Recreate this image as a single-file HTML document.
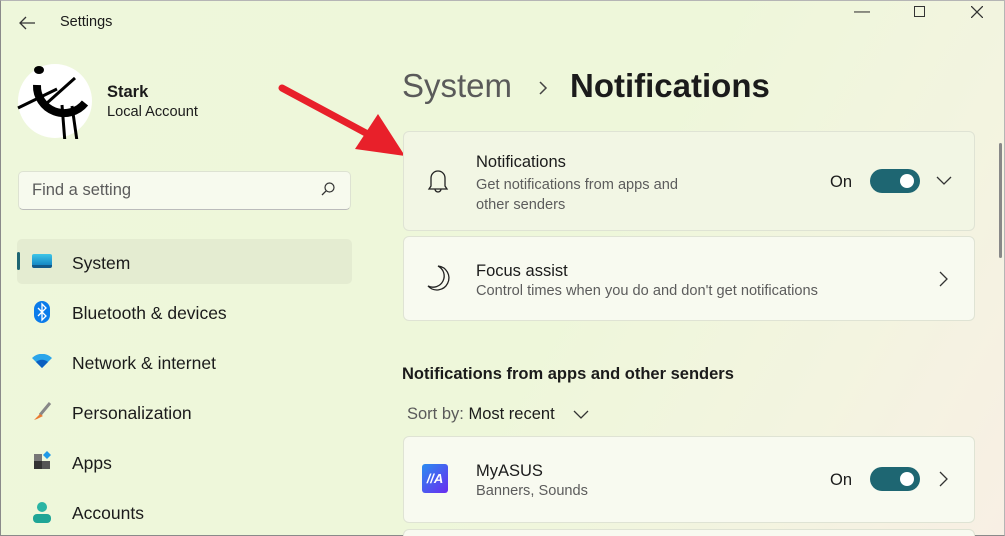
<!DOCTYPE html>
<html style="overflow:hidden;width:1005px;height:536px"><head><style>
*{margin:0;padding:0;box-sizing:border-box}
body{width:1005px;height:536px;overflow:hidden;font-family:"Liberation Sans",sans-serif;color:#1b1b1b;position:relative;
background:linear-gradient(120deg,#eef7db 0%,#eef7da 55%,#f3f4e0 80%,#f8efe4 100%);border-left:1px solid #8a8a8a;border-bottom:1px solid #8a8a8a;border-top:1px solid #b5b5b5;border-right:1px solid #b5b5b5}
.a{position:absolute}
.card{position:absolute;left:402px;width:572px;border:1px solid #dfe3d4;border-radius:6px;background:#f8faf0}
.t{font-size:16.5px;color:#1b1b1b}
.s{font-size:14.6px;color:#5c5c5c}
.tog{position:absolute;width:50px;height:24px;border-radius:12px;background:#1e6672}
.tog:after{content:"";position:absolute;right:6px;top:5px;width:14px;height:14px;border-radius:50%;background:#fff}
.nav{position:absolute;left:71px;font-size:17.5px;color:#1b1b1b}
</style></head><body>
<svg class="a" style="left:17px;top:14px" width="18" height="16"><path d="M17 8H2M8 2L2 8l6 6" fill="none" stroke="#333" stroke-width="1.3"/></svg>
<div class="a" style="left:59px;top:13px;font-size:14.5px">Settings</div>
<div class="a" style="left:853px;top:2px;font-size:16px;color:#333">&#8212;</div>
<div class="a" style="left:913px;top:5px;width:11px;height:11px;border:1.3px solid #333"></div>
<svg class="a" style="left:970px;top:5px" width="12" height="12"><path d="M0 0L12 12M12 0L0 12" stroke="#333" stroke-width="1.3"/></svg>
<svg class="a" style="left:16px;top:62px" width="76" height="76" viewBox="0 0 76 76"><circle cx="38" cy="38" r="37" fill="#fff"/><path d="M20 22a27 27 0 0 0 48 18" fill="none" stroke="#000" stroke-width="8"/><path d="M1 45L40 26M30 40L58 15M60 78L55 43M48 80l-3-38" stroke="#000" stroke-width="3"/><ellipse cx="22" cy="7" rx="5" ry="4" fill="#000"/></svg>
<div class="a" style="left:106px;top:82px;font-size:16.5px;font-weight:bold">Stark</div>
<div class="a" style="left:106px;top:103px;font-size:14.6px">Local Account</div>
<div class="a" style="left:17px;top:170px;width:333px;height:39px;border-radius:5px;background:#f7faee;border:1px solid #dde2d2;border-bottom-color:#bbb"></div>
<div class="a" style="left:31px;top:180px;font-size:16.5px;color:#5b5b5b">Find a setting</div>
<svg class="a" style="left:320px;top:181px" width="14" height="14"><circle cx="8.5" cy="5.5" r="4.5" fill="none" stroke="#333" stroke-width="1.2"/><path d="M5.3 8.7L1 13" stroke="#333" stroke-width="1.3"/></svg>
<div class="a" style="left:16px;top:238px;width:335px;height:45px;border-radius:5px;background:#e4ecd1"></div>
<div class="a" style="left:16px;top:251px;width:3px;height:18px;border-radius:2px;background:#1e6672"></div>
<div class="a" style="left:31px;top:253px;width:20px;height:14px;border-radius:2px;background:linear-gradient(#3ec6e8,#1588c4);border-bottom:3px solid #125a8a"></div>
<div class="nav" style="top:252px">System</div>
<svg class="a" style="left:33px;top:300px" width="16" height="22"><rect width="16" height="22" rx="8" fill="#0a7bea"/><path d="M4 7l8 8-4 4V3l4 4-8 8" fill="none" stroke="#fff" stroke-width="1.3"/></svg>
<div class="nav" style="top:302px">Bluetooth &amp; devices</div>
<svg class="a" style="left:31px;top:353px" width="20" height="14"><path d="M0 4a14 14 0 0 1 20 0L10 14z" fill="#2aa5ea"/><path d="M4 8a9 9 0 0 1 12 0L10 14z" fill="#0a5fc0"/></svg>
<div class="nav" style="top:352px">Network &amp; internet</div>
<svg class="a" style="left:31px;top:401px" width="20" height="20"><path d="M18 1L8 13" stroke="#888" stroke-width="3"/><path d="M8 12l-6 6 3-1 6-3z" fill="#ea7a30"/></svg>
<div class="nav" style="top:402px">Personalization</div>
<svg class="a" style="left:33px;top:450px" width="18" height="18"><rect x="0" y="3" width="8" height="7" fill="#777"/><rect x="0" y="10" width="8" height="8" fill="#333"/><rect x="8" y="10" width="8" height="8" fill="#555"/><path d="M13 0l4 4-4 4-4-4z" fill="#1f9ae8"/></svg>
<div class="nav" style="top:452px">Apps</div>
<svg class="a" style="left:32px;top:500px" width="18" height="22"><circle cx="9" cy="6" r="5" fill="#2ab5a4"/><rect y="13" width="18" height="9" rx="4" fill="#1ea596"/></svg>
<div class="nav" style="top:502px">Accounts</div>
<svg class="a" style="left:276px;top:80px" width="130" height="75"><path d="M5 7L100 58" stroke="#e8202a" stroke-width="7" stroke-linecap="round"/><path d="M78 68L128 75 101 33z" fill="#e8202a"/></svg>
<div class="a" style="left:401px;top:66px;font-size:33px;color:#5a5a5a">System</div>
<svg class="a" style="left:537px;top:80px" width="10" height="14"><path d="M2 1l6 6-6 6" fill="none" stroke="#444" stroke-width="1.5"/></svg>
<div class="a" style="left:569px;top:66px;font-size:33px;font-weight:bold;color:#1b1b1b">Notifications</div>
<div class="card" style="top:130px;height:100px;background:#f2f6e4"></div>
<svg class="a" style="left:426px;top:167px" width="22" height="26"><path d="M4 18V10a7 7 0 0 1 14 0v8l2 3H2z M8 21a3 3 0 0 0 6 0" fill="none" stroke="#222" stroke-width="1.3"/></svg>
<div class="a t" style="left:475px;top:152px">Notifications</div>
<div class="a s" style="left:475px;top:174px;line-height:20px">Get notifications from apps and<br>other senders</div>
<div class="a t" style="left:829px;top:172px">On</div>
<div class="tog" style="left:869px;top:168px"></div>
<svg class="a" style="left:935px;top:175px" width="16" height="10"><path d="M1 1l7 7 7-7" fill="none" stroke="#333" stroke-width="1.3"/></svg>
<div class="card" style="top:235px;height:85px"></div>
<svg class="a" style="left:425px;top:264px" width="26" height="28"><path d="M12 1a12 12 0 1 1-10 20 11 11 0 0 0 10-20z" fill="none" stroke="#222" stroke-width="1.3"/></svg>
<div class="a t" style="left:475px;top:261px">Focus assist</div>
<div class="a s" style="left:475px;top:282px">Control times when you do and don't get notifications</div>
<svg class="a" style="left:938px;top:270px" width="10" height="16"><path d="M1 1l7 7-7 7" fill="none" stroke="#333" stroke-width="1.3"/></svg>
<div class="a" style="left:401px;top:364px;font-size:16.5px;font-weight:bold">Notifications from apps and other senders</div>
<div class="a" style="left:406px;top:404px;font-size:16.5px;color:#5a5a5a">Sort by: <span style="color:#1b1b1b">Most recent</span></div>
<svg class="a" style="left:572px;top:409px" width="16" height="10"><path d="M1 1l7 7 7-7" fill="none" stroke="#333" stroke-width="1.3"/></svg>
<div class="card" style="top:435px;height:87px"></div>
<div class="a" style="left:421px;top:463px;width:26px;height:29px;border-radius:3px;background:linear-gradient(135deg,#2a8cf0,#6a2cf0);color:#fff;font-weight:bold;font-style:italic;font-size:13px;text-align:center;line-height:29px">//A</div>
<div class="a t" style="left:475px;top:461px">MyASUS</div>
<div class="a s" style="left:475px;top:482px">Banners, Sounds</div>
<div class="a t" style="left:829px;top:470px">On</div>
<div class="tog" style="left:869px;top:466px"></div>
<svg class="a" style="left:938px;top:470px" width="10" height="16"><path d="M1 1l7 7-7 7" fill="none" stroke="#333" stroke-width="1.3"/></svg>
<div class="card" style="top:528px;height:20px"></div>
<div class="a" style="left:998px;top:142px;width:3px;height:115px;border-radius:2px;background:#888"></div>
</body></html>
